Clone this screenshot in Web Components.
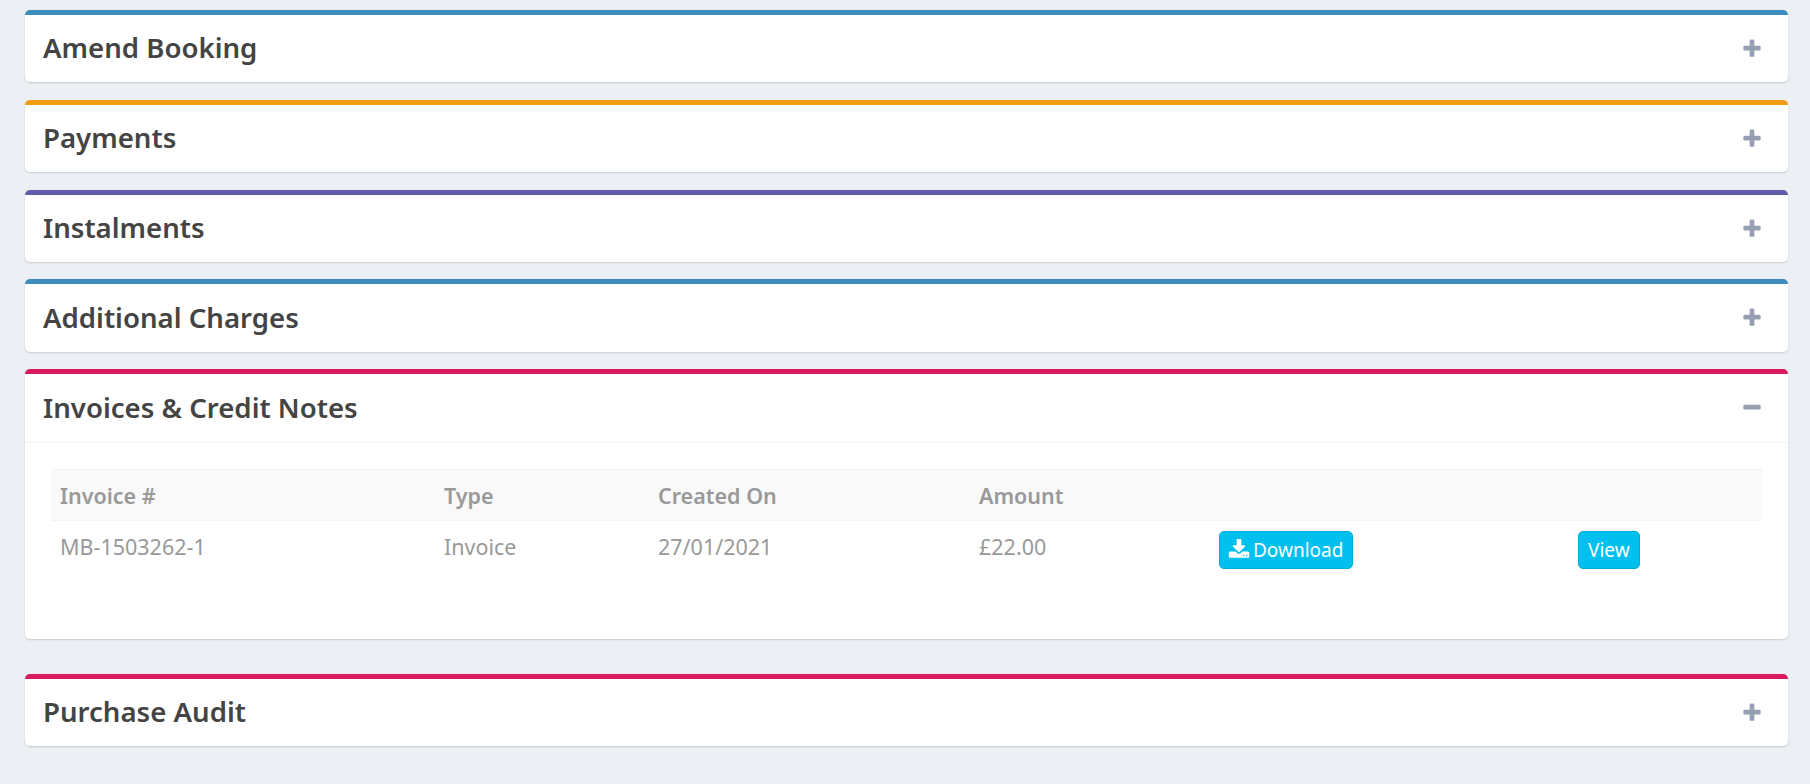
<!DOCTYPE html>
<html lang="en">
<head>
<meta charset="utf-8">
<title>Booking</title>
<style>
  html, body { margin: 0; height: 100%; }
  body {
    background: #ecf0f5;
    font-family: "Noto Sans", "Open Sans", sans-serif;
    overflow: hidden;
  }
  #page { padding: 10px 22px 0 25px; }
</style>
</head>
<body>
<div id="page">
  <booking-panel heading="Amend Booking" color="#3c8dbc"></booking-panel>
  <booking-panel heading="Payments" color="#f39c12"></booking-panel>
  <booking-panel heading="Instalments" color="#605ca8" style="margin-bottom:17px"></booking-panel>
  <booking-panel heading="Additional Charges" color="#3c8dbc" tall style="margin-bottom:17px"></booking-panel>
  <booking-panel heading="Invoices &amp; Credit Notes" color="#d81b60" open style="margin-bottom:35px">
    <invoice-table>
      <invoice-row number="MB-1503262-1" type="Invoice" created="27/01/2021" amount="£22.00"></invoice-row>
    </invoice-table>
  </booking-panel>
  <booking-panel heading="Purchase Audit" color="#d81b60"></booking-panel>
</div>

<script>
const ICONS = {
  plus: 'M1600 736v192q0 40-28 68t-68 28h-416v416q0 40-28 68t-68 28h-192q-40 0-68-28t-28-68v-416h-416q-40 0-68-28t-28-68v-192q0-40 28-68t68-28h416v-416q0-40 28-68t68-28h192q40 0 68 28t28 68v416h416q40 0 68 28t28 68z',
  minus: 'M1600 736v192q0 40-28 68t-68 28h-1216q-40 0-68-28t-28-68v-192q0-40 28-68t68-28h1216q40 0 68 28t28 68z',
  download: 'M1344 1344q0-26-19-45t-45-19-45 19-19 45 19 45 45 19 45-19 19-45zm256 0q0-26-19-45t-45-19-45 19-19 45 19 45 45 19 45-19 19-45zm128-224v320q0 40-28 68t-68 28h-1472q-40 0-68-28t-28-68v-320q0-40 28-68t68-28h465l135 136q58 56 136 56t136-56l136-136h464q40 0 68 28t28 68zm-325-569q17 41-14 70l-448 448q-18 19-45 19t-45-19l-448-448q-31-29-14-70 17-39 59-39h256v-448q0-26 19-45t45-19h256q26 0 45 19t19 45v448h256q42 0 59 39z'
};

function icon(name, size) {
  return `<svg width="${size}" height="${size}" viewBox="0 0 1792 1792" fill="currentColor" aria-hidden="true"><path d="${ICONS[name]}"/></svg>`;
}

class BookingPanel extends HTMLElement {
  connectedCallback() {
    if (this.shadowRoot) return;
    const open = this.hasAttribute('open');
    this.attachShadow({ mode: 'open' }).innerHTML = `
    <style>
      :host {
        display: block;
        margin-bottom: 18px;
        background: #fff;
        border-top: 5px solid ${this.getAttribute('color')};
        border-radius: 5px;
        box-shadow: 0 1px 2px rgba(0, 0, 0, .16);
      }
      header {
        display: flex;
        align-items: center;
        justify-content: space-between;
        height: 67px;
        box-sizing: border-box;
        padding: 0 25px 0 18px;
      }
      :host([tall]) header { height: 68px; }
      :host([open]) header {
        height: 69px;
        border-bottom: 1px solid #f4f4f4;
      }
      h3 {
        margin: 0 0 3px;
        font-size: 27.6px;
        font-weight: 600;
        color: #444;
      }
      svg { display: block; color: #97a0b3; }
      .body { padding: 26px 26px 70px 26px; }
    </style>
    <header>
      <h3>${this.getAttribute('heading').replace('&', '&amp;')}</h3>
      ${icon(open ? 'minus' : 'plus', 22)}
    </header>
    ${open ? '<div class="body"><slot></slot></div>' : ''}
`;
  }
}

class InvoiceTable extends HTMLElement {
  constructor() {
    super();
    this.attachShadow({ mode: 'open' }).innerHTML = `
    <style>
      :host { display: block; color: #999; font-size: 21.5px; }
      .head {
        display: grid;
        grid-template-columns: 384px 214px 321px 240px 359px 1fr;
        align-items: center;
        height: 52px;
        box-sizing: border-box;
        background: #f9f9f9;
        border-top: 1px solid #f4f4f4;
        border-bottom: 1px solid #f4f4f4;
        font-weight: 600;
      }
      .head span { padding-left: 9px; }
    </style>
    <div class="head">
      <span>Invoice #</span><span>Type</span><span>Created On</span><span>Amount</span><span></span><span></span>
    </div>
    <slot></slot>
`;
  }
}

class InvoiceRow extends HTMLElement {
  connectedCallback() {
    if (this.shadowRoot) return;
    const a = (n) => this.getAttribute(n);
    this.attachShadow({ mode: 'open' }).innerHTML = `
    <style>
      :host {
        display: grid;
        grid-template-columns: 384px 214px 321px 240px 359px 1fr;
        align-items: start;
        padding-top: 9px;
        color: #999;
      }
      span { padding-left: 9px; line-height: 34px; }
      div { padding: 1px 0 0 9px; }
    </style>
    <span>${a('number')}</span>
    <span>${a('type')}</span>
    <span>${a('created')}</span>
    <span>${a('amount')}</span>
    <div><info-button icon="download">Download</info-button></div>
    <div><info-button>View</info-button></div>
`;
  }
}

class InfoButton extends HTMLElement {
  constructor() {
    super();
    this.attachShadow({ mode: 'open' });
  }
  connectedCallback() {
    const name = this.getAttribute('icon');
    this.shadowRoot.innerHTML = `
    <style>
      :host {
        display: inline-flex;
        align-items: center;
        gap: 3px;
        height: 38px;
        box-sizing: border-box;
        padding: 0 9px;
        background: #00c0ef;
        border: 1px solid #00acd6;
        border-radius: 5px;
        color: #fff;
        font-size: 19px;
      }
      svg { display: block; margin-left: -1px; }
    </style>
    ${name ? icon(name, 22) : ''}<slot></slot>
`;
  }
}

customElements.define('booking-panel', BookingPanel);
customElements.define('invoice-table', InvoiceTable);
customElements.define('invoice-row', InvoiceRow);
customElements.define('info-button', InfoButton);
</script>
</body>
</html>
